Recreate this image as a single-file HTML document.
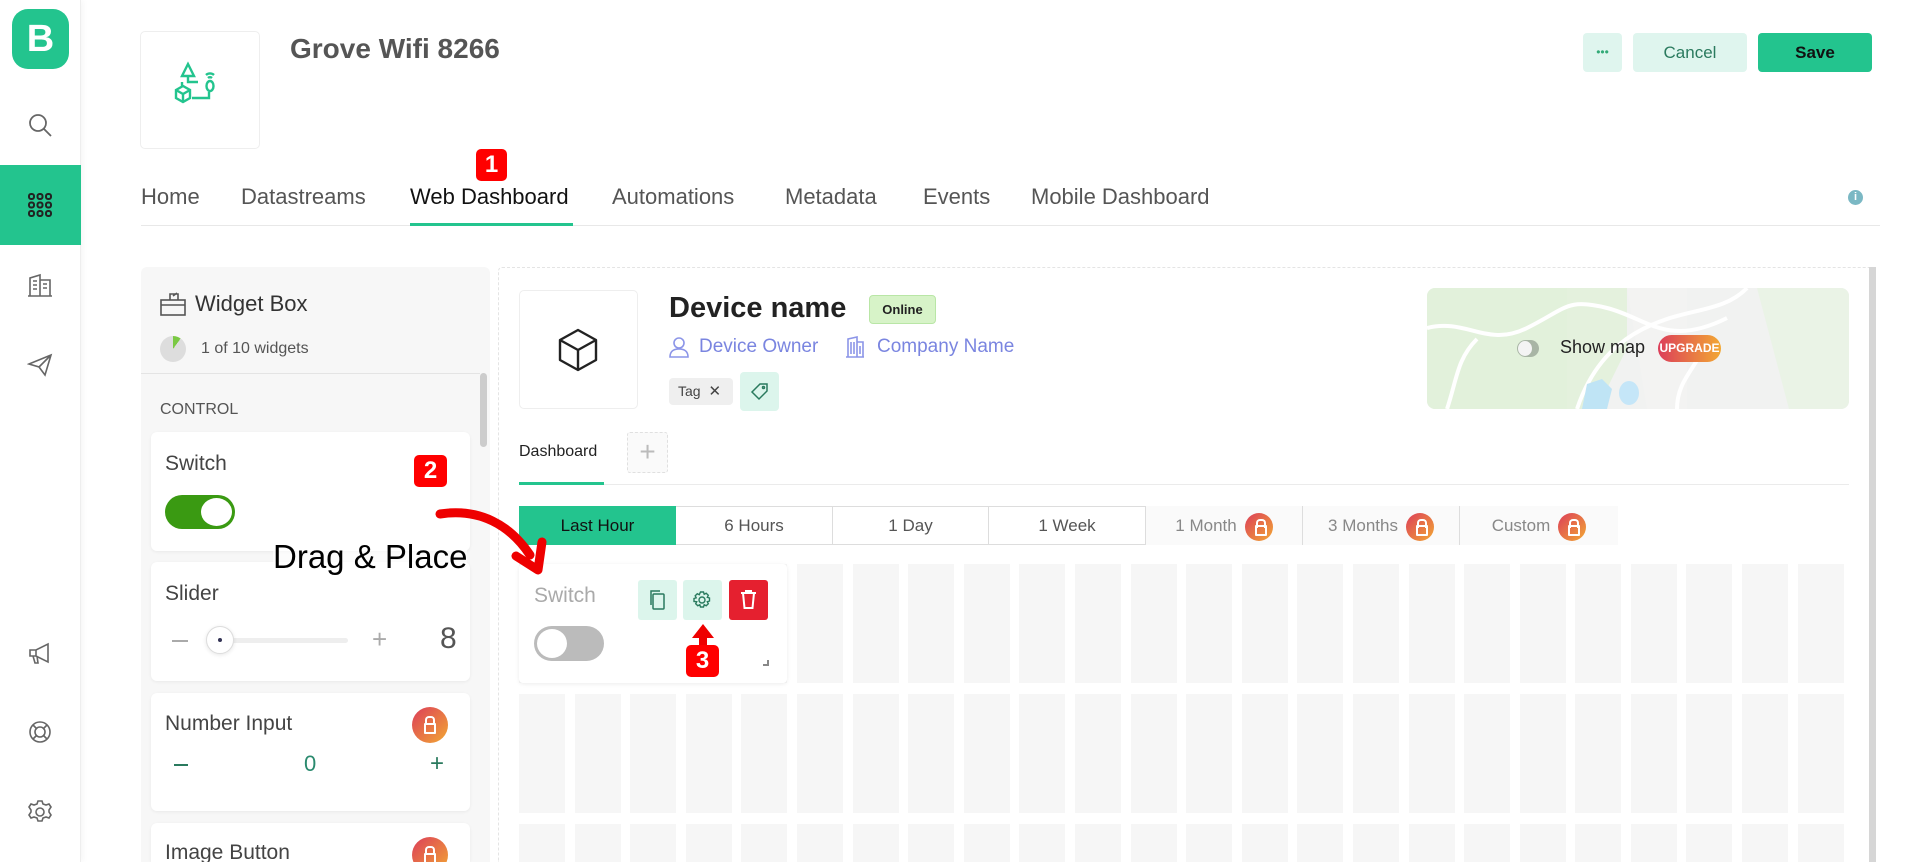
<!DOCTYPE html>
<html style="width:1920px;height:862px;overflow:hidden"><head><meta charset="utf-8"><style>
*{box-sizing:border-box;margin:0;padding:0}
body{width:1920px;height:862px;overflow:hidden;background:#fff;font-family:"Liberation Sans",sans-serif;color:#333;position:relative}
#root{position:absolute;left:0;top:0;width:1920px;height:862px;overflow:hidden}
.a{position:absolute}
.side{left:0;top:0;width:81px;height:862px;background:#fff;border-right:1px solid #eee;box-shadow:2px 0 6px rgba(0,0,0,.04)}
.logo{left:12px;top:9px;width:57px;height:60px;background:#23c48e;border-radius:16px;color:#fff;font-weight:bold;font-size:38px;text-align:center;line-height:60px}
.tab{top:184px;font-size:22px;color:#555}
.btn{border-radius:4px;font-size:17px;text-align:center;line-height:39px}
.badge{background:#f00;color:#fff;font-weight:bold;text-align:center;border-radius:5px;font-size:24px}
.card{background:#fff;border-radius:6px;box-shadow:0 1px 3px rgba(0,0,0,.06);left:151px;width:319px}
.seg{top:506px;height:39px;border-right:1px solid #ddd;font-size:17px;text-align:center;line-height:39px;color:#555}
.lock{display:inline-block;width:28px;height:28px;border-radius:50%;background:linear-gradient(135deg,#dc3e5a,#f2a833);vertical-align:middle;margin-left:8px;position:relative}
.lock:after{content:"";position:absolute;left:10px;top:12px;width:8px;height:7px;border:2px solid #fff;border-radius:1px}
.lock:before{content:"";position:absolute;left:11px;top:6px;width:6px;height:7px;border:2px solid #fff;border-bottom:none;border-radius:4px 4px 0 0}
.big{width:36px;height:36px;margin:0}
.big:after{left:12px;top:16px}
.big:before{left:13px;top:9px}
.grid{display:grid;grid-template-columns:repeat(24,46px);column-gap:9.6px;row-gap:11px;overflow:hidden}
.grid div{background:#f6f6f6;height:119px}
</style></head><body><div id="root">
<div class="a side"></div>
<div class="a logo">B</div>
<svg class="a" style="left:27px;top:112px" width="26" height="26" viewBox="0 0 26 26" fill="none" stroke="#666" stroke-width="1.8"><circle cx="11" cy="11" r="8"/><path d="M17 17l7 7"/></svg>
<div class="a" style="left:0;top:165px;width:81px;height:80px;background:#23c48e"></div>
<svg class="a" style="left:27px;top:192px" width="26" height="26" viewBox="0 0 26 26" fill="none" stroke="#222" stroke-width="2"><g><rect x="2" y="2" width="5" height="5" rx="2"/><rect x="10.5" y="2" width="5" height="5" rx="2"/><rect x="19" y="2" width="5" height="5" rx="2"/><rect x="2" y="10.5" width="5" height="5" rx="2"/><rect x="10.5" y="10.5" width="5" height="5" rx="2"/><rect x="19" y="10.5" width="5" height="5" rx="2"/><rect x="2" y="19" width="5" height="5" rx="2"/><rect x="10.5" y="19" width="5" height="5" rx="2"/><rect x="19" y="19" width="5" height="5" rx="2"/></g></svg>
<svg class="a" style="left:27px;top:272px" width="26" height="26" viewBox="0 0 26 26" fill="none" stroke="#666" stroke-width="1.6"><path d="M3 24V6l10-3v21M13 8h10v16M1 24h24M6 9h4M6 13h4M6 17h4M16 12h4M16 16h4"/></svg>
<svg class="a" style="left:27px;top:352px" width="26" height="26" viewBox="0 0 26 26" fill="none" stroke="#666" stroke-width="1.6"><path d="M2 12L24 3l-6 20-6-8zM12 15l12-12"/></svg>
<svg class="a" style="left:27px;top:641px" width="26" height="26" viewBox="0 0 26 26" fill="none" stroke="#666" stroke-width="1.6"><path d="M3 9h6l12-6v18l-12-6H3zM9 9v6M6 15l2 7h3l-1-7"/></svg>
<svg class="a" style="left:27px;top:719px" width="26" height="26" viewBox="0 0 26 26" fill="none" stroke="#666" stroke-width="1.6"><circle cx="13" cy="13" r="10"/><circle cx="13" cy="13" r="5"/><path d="M6 6l4 4M20 6l-4 4M6 20l4-4M20 20l-4-4"/></svg>
<svg class="a" style="left:27px;top:799px" width="26" height="26" viewBox="0 0 26 26" fill="none" stroke="#666" stroke-width="1.6"><circle cx="13" cy="13" r="4"/><path d="M11 2h4l1 3 3 1 3-1 2 3-2 3v2l2 3-2 3-3-1-3 1-1 3h-4l-1-3-3-1-3 1-2-3 2-3v-2l-2-3 2-3 3 1 3-1z"/></svg>

<div class="a" style="left:140px;top:31px;width:120px;height:118px;border:1px solid #eee;border-radius:5px"></div>
<svg class="a" style="left:170px;top:60px" width="60" height="60" viewBox="0 0 60 60" fill="none" stroke="#23c48e" stroke-width="2.4"><path d="M18 4l-6 12h12zM18 16v6h10M12 22v4M6 30l7-4 7 4v8l-7 4-7-4zM6 30l7 4 7-4M13 34v8M22 38h17v-6"/><ellipse cx="40" cy="26" rx="3.5" ry="5"/><path d="M36 15a6 6 0 0 1 8 0M38 18a3 3 0 0 1 4 0"/></svg>
<div class="a" style="left:290px;top:33px;font-size:28px;font-weight:bold;color:#555">Grove Wifi 8266</div>
<div class="a btn" style="left:1583px;top:33px;width:39px;background:#dff5ee;color:#3a7;font-size:12px">•••</div>
<div class="a btn" style="left:1633px;top:33px;width:114px;background:#dff5ee;color:#2a7a5e">Cancel</div>
<div class="a btn" style="left:1758px;top:33px;width:114px;background:#23c48e;color:#111;font-weight:bold">Save</div>

<div class="a tab" style="left:141px">Home</div>
<div class="a tab" style="left:241px">Datastreams</div>
<div class="a tab" style="left:410px;color:#111">Web Dashboard</div>
<div class="a tab" style="left:612px">Automations</div>
<div class="a tab" style="left:785px">Metadata</div>
<div class="a tab" style="left:923px">Events</div>
<div class="a tab" style="left:1031px">Mobile Dashboard</div>
<div class="a" style="left:141px;top:225px;width:1739px;height:1px;background:#e8e8e8"></div>
<div class="a" style="left:410px;top:223px;width:163px;height:3px;background:#23c48e"></div>
<div class="a badge" style="left:476px;top:149px;width:31px;height:32px;line-height:32px">1</div>
<div class="a" style="left:1848px;top:190px;width:15px;height:15px;border-radius:50%;background:#7bb8c4;color:#fff;font-size:11px;text-align:center;line-height:15px;font-weight:bold">i</div>

<div class="a" style="left:141px;top:267px;width:349px;height:595px;background:#f7f7f7;border-radius:6px 6px 0 0"></div>
<svg class="a" style="left:160px;top:292px" width="26" height="24" viewBox="0 0 26 24" fill="none" stroke="#555" stroke-width="1.6"><rect x="1" y="8" width="24" height="15"/><path d="M1 13h24M10 8V2h8v6M13 4l4-3"/></svg>
<div class="a" style="left:195px;top:291px;font-size:22px;color:#333">Widget Box</div>
<div class="a" style="left:160px;top:336px;width:26px;height:26px;border-radius:50%;background:conic-gradient(#7ac943 0 36deg,#ddd 36deg)"></div>
<div class="a" style="left:201px;top:340px;font-size:16px;color:#555">1 of 10 widgets</div>
<div class="a" style="left:141px;top:373px;width:339px;height:1px;background:#e4e4e4"></div>
<div class="a" style="left:160px;top:401px;font-size:16px;color:#555">CONTROL</div>
<div class="a" style="left:480px;top:373px;width:7px;height:74px;background:#ccc;border-radius:4px"></div>

<div class="a card" style="top:432px;height:119px"></div>
<div class="a" style="left:165px;top:452px;font-size:21px;color:#444">Switch</div>
<div class="a" style="left:165px;top:495px;width:70px;height:34px;border-radius:17px;background:#3a9a12"></div>
<div class="a" style="left:201px;top:498px;width:31px;height:28px;border-radius:50%;background:#fff"></div>
<div class="a badge" style="left:414px;top:455px;width:33px;height:32px;line-height:32px">2</div>

<div class="a card" style="top:562px;height:119px"></div>
<div class="a" style="left:165px;top:582px;font-size:21px;color:#444">Slider</div>
<div class="a" style="left:172px;top:640px;width:16px;height:1.5px;background:#aaa"></div>
<div class="a" style="left:220px;top:638px;width:128px;height:5px;background:#eee;border-radius:3px"></div>
<div class="a" style="left:206px;top:626px;width:28px;height:28px;border-radius:50%;background:#fff;border:1px solid #ddd;box-shadow:0 1px 4px rgba(0,0,0,.1)"></div>
<div class="a" style="left:218px;top:638px;width:4px;height:4px;border-radius:50%;background:#335"></div>
<div class="a" style="left:372px;top:624px;font-size:26px;color:#aaa;font-weight:200">+</div>
<div class="a" style="left:440px;top:622px;font-size:30px;color:#555">8</div>

<div class="a card" style="top:693px;height:118px"></div>
<div class="a" style="left:165px;top:712px;font-size:21px;color:#444">Number Input</div>
<div class="a lock big" style="left:412px;top:707px"></div>
<div class="a" style="left:174px;top:764px;width:14px;height:1.5px;background:#2a7a5e"></div>
<div class="a" style="left:304px;top:751px;font-size:22px;color:#2a8a6e">0</div>
<div class="a" style="left:430px;top:750px;font-size:24px;color:#2a7a5e">+</div>

<div class="a card" style="top:823px;height:39px;border-radius:6px 6px 0 0"></div>
<div class="a" style="left:165px;top:841px;height:21px;overflow:hidden;font-size:21px;line-height:24px;color:#444">Image Button</div>
<div class="a" style="left:412px;top:837px;width:36px;height:25px;overflow:hidden"><div class="a lock big" style="left:0;top:0"></div></div>

<div class="a" style="left:498px;top:267px;width:1378px;height:595px;border:1px dashed #e4e4e4;border-bottom:none;border-radius:4px 4px 0 0"></div>
<div class="a" style="left:1869px;top:267px;width:7px;height:595px;background:#d6d6d6"></div>
<div class="a" style="left:519px;top:290px;width:119px;height:119px;border:1px solid #eee;border-radius:5px"></div>
<svg class="a" style="left:556px;top:327px" width="44" height="46" viewBox="0 0 44 46" fill="none" stroke="#222" stroke-width="2.4" stroke-linejoin="round"><path d="M22 3L40 13v20L22 43 4 33V13zM4 13l18 10 18-10M22 23v20"/></svg>
<div class="a" style="left:669px;top:292px;font-size:29px;font-weight:bold;color:#222">Device name</div>
<div class="a" style="left:869px;top:295px;width:67px;height:29px;background:#d7f3c8;border:1px solid #b9e6a6;border-radius:4px;font-size:13px;font-weight:bold;text-align:center;line-height:27px;color:#222">Online</div>
<svg class="a" style="left:668px;top:336px" width="22" height="22" viewBox="0 0 22 22" fill="none" stroke="#8c95e8" stroke-width="1.6"><circle cx="11" cy="7" r="5"/><path d="M2 21c0-6 4-8 9-8s9 2 9 8z"/></svg>
<div class="a" style="left:699px;top:336px;font-size:19px;color:#7a85e0">Device Owner</div>
<svg class="a" style="left:845px;top:336px" width="20" height="22" viewBox="0 0 20 22" fill="none" stroke="#8c95e8" stroke-width="1.6"><path d="M3 21V3l9-2v20M12 6h6v15M1 21h18M6 6v12M9 6v12M15 10v8"/></svg>
<div class="a" style="left:877px;top:336px;font-size:19px;color:#7a85e0">Company Name</div>
<div class="a" style="left:669px;top:378px;width:64px;height:27px;background:#efefef;border-radius:4px;font-size:14px;line-height:27px;padding-left:9px;color:#444">Tag <span style="font-size:15px;margin-left:4px">✕</span></div>
<div class="a" style="left:740px;top:372px;width:39px;height:39px;background:#dcf5ec;border-radius:4px"></div>
<svg class="a" style="left:750px;top:382px" width="19" height="19" viewBox="0 0 19 19" fill="none" stroke="#2a7a5e" stroke-width="1.5"><path d="M10 2h7v7l-8 8-7-7z"/><circle cx="13.5" cy="5.5" r="1"/></svg>

<div class="a" style="left:1427px;top:288px;width:422px;height:121px;border-radius:8px;overflow:hidden;background:#eef0ee">
<svg width="422" height="121" viewBox="0 0 422 121"><rect width="422" height="121" fill="#f1f2f1"/><path d="M0 0h140v121H0z" fill="#dff0d6" opacity=".8"/><path d="M140 0h60v60l-30 61h-30z" fill="#e4f1dd"/><path d="M200 0h60v121h-40z" fill="#f3f3f2"/><path d="M330 0h92v121h-60z" fill="#eaf3e6"/><path d="M0 40c40-10 60 20 100 0s40-30 80-20 60 40 120 10M150 121c20-60 60-80 90-90s60-10 80-31M250 121c0-30 20-40 30-70M20 121c10-30 10-50 30-70" stroke="#fff" stroke-width="4" fill="none"/><path d="M155 121l5-25 15-5 10 10-5 20z" fill="#bfe4f5"/><ellipse cx="202" cy="105" rx="10" ry="12" fill="#c5e6f8"/></svg></div>
<div class="a" style="left:1517px;top:340px;width:22px;height:17px;border-radius:9px;background:#a8b5a5"></div>
<div class="a" style="left:1518px;top:341px;width:14px;height:15px;border-radius:50%;background:#f4f4f4"></div>
<div class="a" style="left:1560px;top:337px;font-size:18px;color:#222">Show map</div>
<div class="a" style="left:1658px;top:335px;width:63px;height:27px;border-radius:14px;background:linear-gradient(90deg,#dc3e5a,#f2a833);color:#fff;font-size:12px;font-weight:bold;text-align:center;line-height:27px">UPGRADE</div>

<div class="a" style="left:519px;top:443px;font-size:16px;color:#222">Dashboard</div>
<div class="a" style="left:627px;top:432px;width:41px;height:41px;border:1px dashed #e0e0e0;border-radius:3px;background:#fafafa;color:#bbb;font-size:28px;text-align:center;line-height:38px;font-weight:200">+</div>
<div class="a" style="left:519px;top:484px;width:1330px;height:1px;background:#ebebeb"></div>
<div class="a" style="left:519px;top:482px;width:85px;height:3px;background:#23c48e"></div>

<div class="a" style="left:519px;top:506px;width:1099px;height:39px;border:1px solid #ddd;border-radius:3px"></div>
<div class="a seg" style="left:519px;width:157px;background:#23c48e;color:#111;border:none">Last Hour</div>
<div class="a seg" style="left:676px;width:157px">6 Hours</div>
<div class="a seg" style="left:833px;width:156px">1 Day</div>
<div class="a seg" style="left:989px;width:157px">1 Week</div>
<div class="a seg" style="left:1146px;width:157px;background:#fafafa;color:#888">1 Month<span class="lock"></span></div>
<div class="a seg" style="left:1303px;width:157px;background:#fafafa;color:#888">3 Months<span class="lock"></span></div>
<div class="a seg" style="left:1460px;width:158px;background:#fafafa;color:#888;border-right:none">Custom<span class="lock"></span></div>

<div class="a grid" style="left:519px;top:564px;width:1340px;height:298px">
<div></div><div></div><div></div><div></div><div></div><div></div><div></div><div></div><div></div><div></div><div></div><div></div><div></div><div></div><div></div><div></div><div></div><div></div><div></div><div></div><div></div><div></div><div></div><div></div>
<div></div><div></div><div></div><div></div><div></div><div></div><div></div><div></div><div></div><div></div><div></div><div></div><div></div><div></div><div></div><div></div><div></div><div></div><div></div><div></div><div></div><div></div><div></div><div></div>
<div style="height:38px"></div><div style="height:38px"></div><div style="height:38px"></div><div style="height:38px"></div><div style="height:38px"></div><div style="height:38px"></div><div style="height:38px"></div><div style="height:38px"></div><div style="height:38px"></div><div style="height:38px"></div><div style="height:38px"></div><div style="height:38px"></div><div style="height:38px"></div><div style="height:38px"></div><div style="height:38px"></div><div style="height:38px"></div><div style="height:38px"></div><div style="height:38px"></div><div style="height:38px"></div><div style="height:38px"></div><div style="height:38px"></div><div style="height:38px"></div><div style="height:38px"></div><div style="height:38px"></div>
</div>
<div class="a" style="left:519px;top:564px;width:268px;height:119px;background:#fff;border-radius:4px;box-shadow:0 1px 4px rgba(0,0,0,.08)"></div>
<div class="a" style="left:534px;top:584px;font-size:21px;color:#aaa">Switch</div>
<div class="a" style="left:534px;top:626px;width:70px;height:35px;border-radius:18px;background:#bbb"></div>
<div class="a" style="left:537px;top:629px;width:30px;height:29px;border-radius:50%;background:#fff"></div>
<div class="a" style="left:638px;top:580px;width:39px;height:40px;background:#dcf5ec;border-radius:3px"></div>
<svg class="a" style="left:648px;top:589px" width="19" height="21" viewBox="0 0 19 21" fill="none" stroke="#2a7a5e" stroke-width="1.5"><rect x="5" y="5" width="11" height="15" rx="1"/><path d="M3 16V2h9"/></svg>
<div class="a" style="left:683px;top:580px;width:39px;height:40px;background:#dcf5ec;border-radius:3px"></div>
<svg class="a" style="left:692px;top:590px" width="20" height="20" viewBox="0 0 20 20" fill="none" stroke="#2a7a5e" stroke-width="1.4"><circle cx="10" cy="10" r="3"/><path d="M8.5 2h3l.7 2.2 2-1 2.1 2.1-1 2 2.2.7v3l-2.2.7 1 2-2.1 2.1-2-1-.7 2.2h-3l-.7-2.2-2 1-2.1-2.1 1-2L2 11.5v-3l2.2-.7-1-2 2.1-2.1 2 1z"/></svg>
<div class="a" style="left:729px;top:580px;width:39px;height:40px;background:#e5202f;border-radius:3px"></div>
<svg class="a" style="left:739px;top:589px" width="19" height="21" viewBox="0 0 19 21" fill="none" stroke="#fff" stroke-width="2"><path d="M2 4h15M7 4V2h5v2M4 4l1.5 15h8L15 4"/></svg>
<div class="a" style="left:763px;top:660px;width:6px;height:6px;border-right:2px solid #888;border-bottom:2px solid #888"></div>
<svg class="a" style="left:688px;top:624px" width="30" height="24" viewBox="0 0 30 24"><path d="M15 0L4 14h7v10h8V14h7z" fill="#e00"/></svg>
<div class="a badge" style="left:686px;top:645px;width:33px;height:32px;line-height:32px">3</div>

<svg class="a" style="left:430px;top:500px" width="120" height="80" viewBox="0 0 120 80" fill="none"><path d="M10 14C50 8 80 25 100 55" stroke="#e00" stroke-width="9" stroke-linecap="round"/><path d="M86 56l22 14 4-28" stroke="#e00" stroke-width="9" stroke-linecap="round" stroke-linejoin="round"/></svg>
<div class="a" style="left:273px;top:538px;font-size:33px;color:#000;background:rgba(255,255,255,.6)">Drag &amp; Place</div>
</div></body></html>
